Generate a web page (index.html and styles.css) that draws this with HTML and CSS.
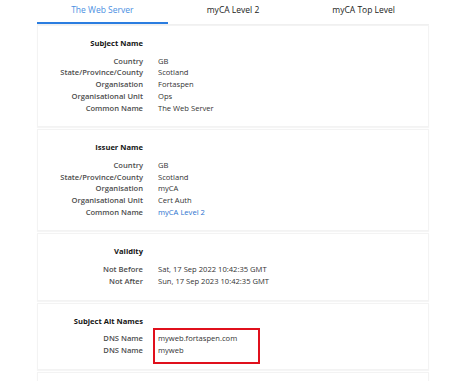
FILE: index.html
```html
<!DOCTYPE html>
<html lang="en">
<head>
    <meta charset="UTF-8">
    <meta name="viewport" content="width=device-width, initial-scale=1.0">
    <title>Certificate</title>
    <link rel="stylesheet" href="styles.css">
</head>
<body>
    <div class="container">
        <div class="tabs">
            <div class="tab active">The Web Server</div>
            <div class="tab">myCA Level 2</div>
            <div class="tab">myCA Top Level</div>
        </div>

        <div class="card">
            <div class="card-title">Subject Name</div>
            <div class="fields">
                <div class="label">Country</div><div class="value">GB</div>
                <div class="label">State/Province/County</div><div class="value">Scotland</div>
                <div class="label">Organisation</div><div class="value">Fortaspen</div>
                <div class="label">Organisational Unit</div><div class="value">Ops</div>
                <div class="label">Common Name</div><div class="value">The Web Server</div>
            </div>
        </div>

        <div class="card">
            <div class="card-title">Issuer Name</div>
            <div class="fields">
                <div class="label">Country</div><div class="value">GB</div>
                <div class="label">State/Province/County</div><div class="value">Scotland</div>
                <div class="label">Organisation</div><div class="value">myCA</div>
                <div class="label">Organisational Unit</div><div class="value">Cert Auth</div>
                <div class="label">Common Name</div><div class="value"><a href="#">myCA Level 2</a></div>
            </div>
        </div>

        <div class="card">
            <div class="card-title">Validity</div>
            <div class="fields">
                <div class="label">Not Before</div><div class="value">Sat, 17 Sep 2022 10:42:35 GMT</div>
                <div class="label">Not After</div><div class="value">Sun, 17 Sep 2023 10:42:35 GMT</div>
            </div>
        </div>

        <div class="card">
            <div class="card-title">Subject Alt Names</div>
            <div class="fields">
                <div class="labels">
                    <div class="label">DNS Name</div>
                    <div class="label">DNS Name</div>
                </div>
                <div class="highlight">
                    <div class="value">myweb.fortaspen.com</div>
                    <div class="value">myweb</div>
                </div>
            </div>
        </div>

        <div class="card"></div>
    </div>
</body>
</html>
```

FILE: styles.css
```css
body {
    margin: 0;
    background: #fff;
    font-family: 'Open Sans', 'Noto Sans', sans-serif;
    color: #333;
}

.container {
    width: 392px;
    margin-left: 37px;
}

/* Tabs */
.tabs {
    display: flex;
    height: 24px;
    border-bottom: 1px solid #f0f0f0;
}

.tab {
    flex: 1;
    text-align: center;
    font-size: 8.5px;
    line-height: 20px;
    color: #222;
}

.tab.active {
    color: #4a90e2;
    border-bottom: 2px solid #2b7de0;
}

/* Cards */
.card {
    background: #fff;
    border: 1px solid #f3f3f3;
    box-shadow: 0 1px 1px rgba(0, 0, 0, 0.04);
    margin-bottom: 2px;
    padding: 12px 0 12px 0;
    font-size: 7.6px;
    line-height: 11.7px;
}

.card:empty {
    height: 10px;
    padding: 0;
}

.card-title {
    width: 105px;
    text-align: right;
    font-weight: 700;
    color: #151515;
    margin-bottom: 6px;
}

.fields {
    display: grid;
    grid-template-columns: 105px auto;
    column-gap: 15px;
    align-items: start;
}

.label {
    text-align: right;
    font-weight: 600;
    color: #4d4d4d;
}

.value {
    color: #333;
}

.value a {
    color: #2b73cf;
    text-decoration: none;
}

.highlight {
    width: 100px;
    margin: -5px 0 -7px -5px;
    padding: 3px 0 5px 3px;
    border: 2px solid #e0101c;
}
```
